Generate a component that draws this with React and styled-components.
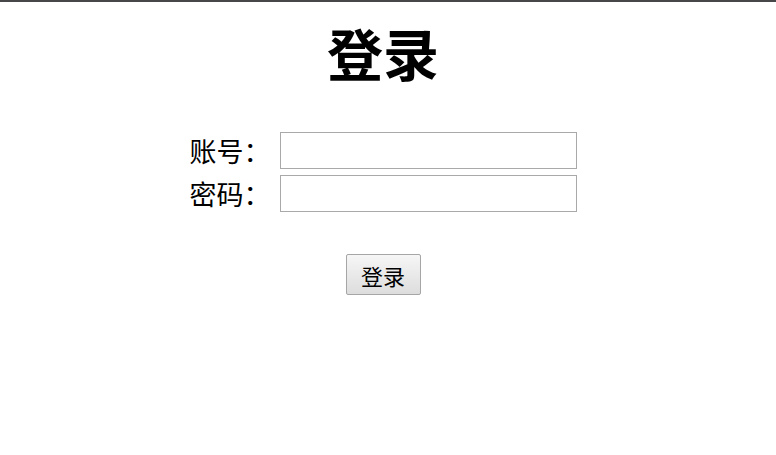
import React from 'react';
import styled, { createGlobalStyle } from 'styled-components';

const GlobalStyle = createGlobalStyle`
  html, body {
    margin: 0;
    padding: 0;
    background: #fff;
  }
  body {
    font-family: "Noto Sans CJK SC", "Liberation Sans", sans-serif;
    color: #000;
  }
`;

const Frame = styled.div`
  width: 776px;
  height: 455px;
  border-top: 2px solid #47474a;
  box-sizing: border-box;
`;

// content is centred on 766px, the reference sits a little left of the middle
const Page = styled.div`
  width: 766px;
  display: flex;
  flex-direction: column;
  align-items: center;
`;

const Title = styled.h1`
  margin: 12px 0 0 0;
  font-size: 56px;
  line-height: 76px;
  font-weight: 700;
`;

const Form = styled.form`
  margin-top: 42px;
  display: flex;
  flex-direction: column;
  align-items: center;
  gap: 6px;
`;

const Row = styled.div`
  display: flex;
  align-items: center;
`;

const Label = styled.label`
  width: 90px;
  font-size: 27px;
  line-height: 37px;
  white-space: nowrap;
`;

const Input = styled.input`
  width: 297px;
  height: 37px;
  box-sizing: border-box;
  border: 1px solid #a9a9a9;
  background: #fff;
  outline: none;
  padding: 0 4px;
  font-size: 16px;
`;

const Submit = styled.button`
  margin-top: 36px;
  width: 75px;
  height: 41px;
  box-sizing: border-box;
  border: 1px solid #a6a6a6;
  border-radius: 2px;
  background: linear-gradient(#f6f6f6, #dddddd);
  font-family: "Noto Sans CJK SC", sans-serif;
  font-size: 22px;
  color: #000;
  padding: 0;
  cursor: pointer;
`;

export default function App() {
  return (
    <>
      <GlobalStyle />
      <Frame>
        <Page>
          <Title>登录</Title>
          <Form onSubmit={e => e.preventDefault()}>
            <Row>
              <Label htmlFor="account">账号：</Label>
              <Input id="account" type="text" />
            </Row>
            <Row>
              <Label htmlFor="password">密码：</Label>
              <Input id="password" type="password" />
            </Row>
            <Submit type="submit">登录</Submit>
          </Form>
        </Page>
      </Frame>
    </>
  );
}
